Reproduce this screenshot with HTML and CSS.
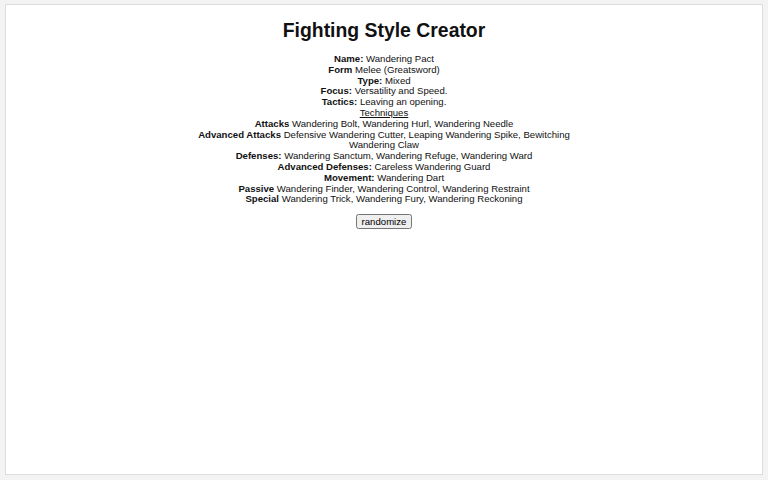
FILE: index.html
```html
<!doctype html>
<html lang="en-US">
  <head>
    <meta charset="UTF-8" />
    <meta name="viewport" content="width=device-width, initial-scale=1" />
    <link rel="stylesheet" href="styles.css">
  </head>
  <body class="l-page">
    <main class="creator">
      <h1 class="creator__title">Fighting Style Creator</h1>
      <div class="style-sheet">
        <p><b>Name:</b> Wandering Pact</p>
        <p><b>Form</b> Melee (Greatsword)</p>
        <p><b>Type:</b> Mixed</p>
        <p><b>Focus:</b> Versatility and Speed.</p>
        <p><b>Tactics:</b> Leaving an opening.</p>
        <p class="style-sheet__heading">Techniques</p>
        <p><b>Attacks</b> Wandering Bolt, Wandering Hurl, Wandering Needle</p>
        <p><b>Advanced Attacks</b> Defensive Wandering Cutter, Leaping Wandering Spike, Bewitching Wandering Claw</p>
        <p><b>Defenses:</b> Wandering Sanctum, Wandering Refuge, Wandering Ward</p>
        <p><b>Advanced Defenses:</b> Careless Wandering Guard</p>
        <p><b>Movement:</b> Wandering Dart</p>
        <p><b>Passive</b> Wandering Finder, Wandering Control, Wandering Restraint</p>
        <p><b>Special</b> Wandering Trick, Wandering Fury, Wandering Reckoning</p>
      </div>
      <button class="creator__button" id="randomize">randomize</button>
    </main>
  </body>
</html>
```

FILE: styles.css
```css
html {
  background: #f3f3f3;
}

.l-page {
  margin: 0;
  padding: 4px 5px 5px;
  font-family: "Liberation Sans", Arial, sans-serif;
  color: #111;
}

.creator {
  box-sizing: border-box;
  height: calc(100vh - 9px);
  background: #fff;
  border: 1px solid #dcdcdc;
  text-align: center;
  padding-top: 14px;
}

.creator__title {
  margin: 0 0 12px;
  font-size: 19.4px;
  line-height: 23px;
}

.style-sheet {
  max-width: 380px;
  margin: 0 auto;
  font-size: 9.6px;
  line-height: 10.8px;
}

.style-sheet p {
  margin: 0;
}

.style-sheet__heading {
  text-decoration: underline;
}

.creator__button {
  margin-top: 9px;
  font-family: "Liberation Sans", Arial, sans-serif;
  font-size: 9.6px;
  padding: 0 4px;
}
```
